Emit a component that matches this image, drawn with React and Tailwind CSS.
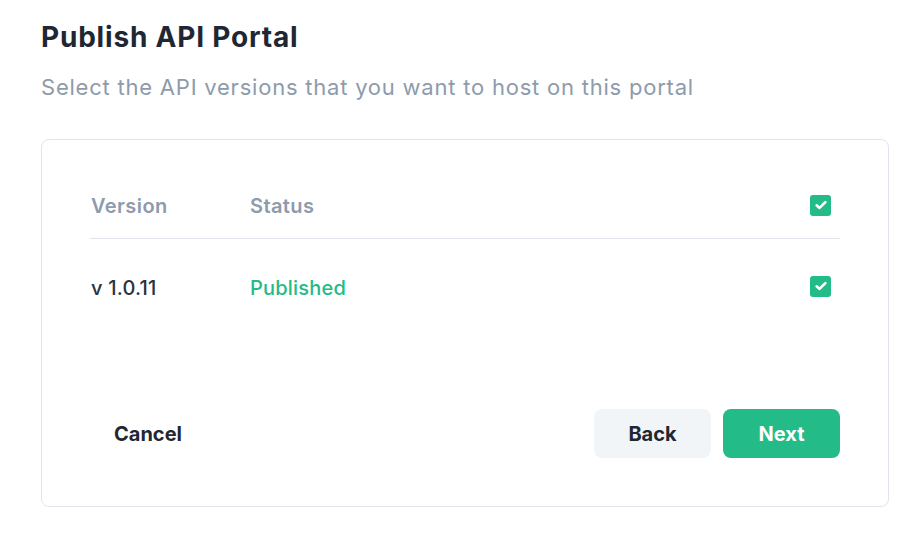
import React from "react";

function Check() {
  return (
    <span className="flex h-[21px] w-[21px] items-center justify-center rounded-[3px] bg-[#23bb87]">
      <svg width="14" height="14" viewBox="0 0 24 24" fill="none" stroke="white" strokeWidth="4.5" strokeLinecap="round" strokeLinejoin="round">
        <path d="M4.5 12.5l5 4.5L19.5 7" />
      </svg>
    </span>
  );
}

export default function App() {
  return (
    <div className="min-h-screen bg-white px-[41px] pt-[18px] font-['Inter',sans-serif]">
      <h1 className="text-[28px] font-bold leading-[38px] tracking-[0.8px] text-[#1e2733]">Publish API Portal</h1>
      <p className="mt-[15px] text-[22px] leading-[32px] tracking-[0.78px] text-[#8d9bab]">
        Select the API versions that you want to host on this portal
      </p>
      <div className="mt-[36px] w-[848px] rounded-[8px] border border-[#e1e4ec] px-12 pb-12 pt-[36px]">
        <div className="flex h-[63px] items-center border-b border-[#e1e4ec] pb-[2px]">
          <div className="w-[160px] pl-[1px] text-[20px] font-semibold tracking-[0.4px] text-[#8d9bab]">Version</div>
          <div className="flex-1 text-[20px] font-semibold tracking-[0.4px] text-[#8d9bab]">Status</div>
          <div className="mb-[2px] pr-[9px]"><Check /></div>
        </div>
        <div className="flex h-[98px] items-center">
          <div className="w-[160px] pl-[1px] text-[20px] font-medium tracking-[0.2px] text-[#2a3340]">v 1.0.11</div>
          <div className="flex-1 text-[20px] font-medium tracking-[0.2px] text-[#23bb87]">Published</div>
          <div className="mb-[4px] pr-[9px]"><Check /></div>
        </div>
        <div className="mt-[72px] flex items-center">
          <button className="ml-[24px] text-[20px] font-bold text-[#1e2733]">Cancel</button>
          <div className="ml-auto flex gap-3">
            <button className="h-[49px] w-[117px] rounded-[8px] bg-[#f2f5f8] text-[20px] font-bold text-[#1e2733]">Back</button>
            <button className="h-[49px] w-[117px] rounded-[8px] bg-[#23bb87] text-[20px] font-bold text-white">Next</button>
          </div>
        </div>
      </div>
    </div>
  );
}
